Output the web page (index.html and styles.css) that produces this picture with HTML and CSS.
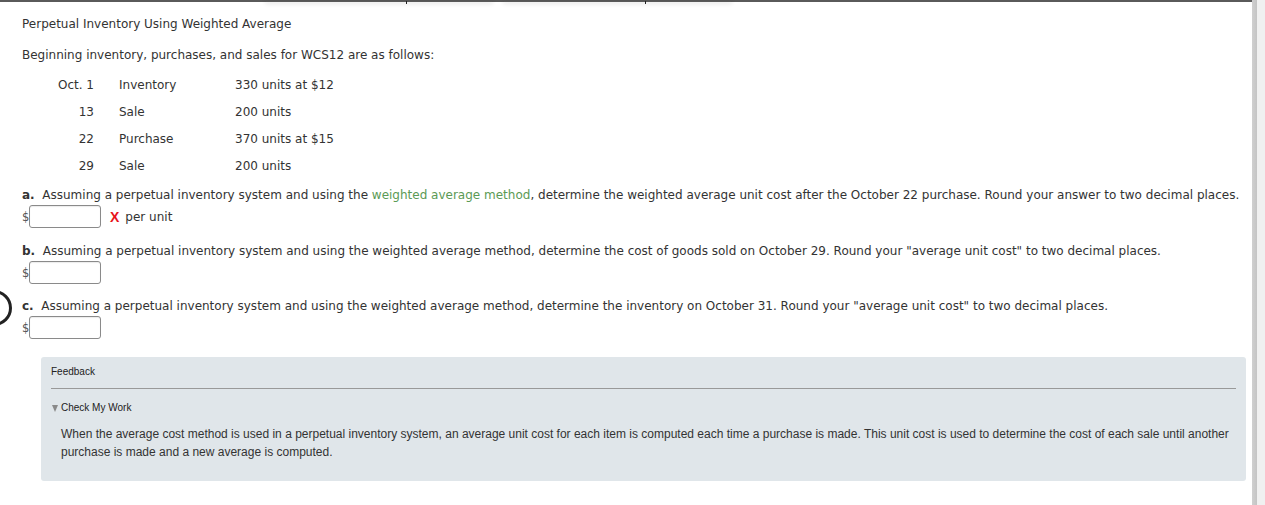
FILE: index.html
```html
<!DOCTYPE html>
<html>
<head>
<meta charset="utf-8">
<link rel="stylesheet" href="styles.css">
</head>
<body>
<div class="frame">
  <div class="topbar">
    <div class="tabshadow s1"><span class="tick"></span></div>
    <div class="tabshadow s2"><span class="tick"></span></div>
  </div>
  <div class="circle"></div>
  <div class="content">
    <p class="title">Perpetual Inventory Using Weighted Average</p>
    <p class="intro">Beginning inventory, purchases, and sales for WCS12 are as follows:</p>
    <div class="table">
      <span class="date">Oct. 1</span><span>Inventory</span><span>330 units at $12</span>
      <span class="date">13</span><span>Sale</span><span>200 units</span>
      <span class="date">22</span><span>Purchase</span><span>370 units at $15</span>
      <span class="date">29</span><span>Sale</span><span>200 units</span>
    </div>
    <p class="q qa"><b>a.</b>&nbsp; Assuming a perpetual inventory system and using the <span class="link">weighted average method</span>, determine the weighted average unit cost after the October 22 purchase. Round your answer to two decimal places.</p>
    <div class="answer"><span class="dollar">$</span><span class="input"></span><span class="x">X</span><span class="unit">per unit</span></div>
    <p class="q qb"><b>b.</b>&nbsp; Assuming a perpetual inventory system and using the weighted average method, determine the cost of goods sold on October 29. Round your "average unit cost" to two decimal places.</p>
    <div class="answer"><span class="dollar">$</span><span class="input"></span></div>
    <p class="q qc"><b>c.</b>&nbsp; Assuming a perpetual inventory system and using the weighted average method, determine the inventory on October 31. Round your "average unit cost" to two decimal places.</p>
    <div class="answer"><span class="dollar">$</span><span class="input"></span></div>
  </div>
  <div class="feedback">
    <div class="fb-title">Feedback</div>
    <div class="fb-rule"></div>
    <div class="fb-check"><span class="tri"></span>Check My Work</div>
    <p class="fb-text">When the average cost method is used in a perpetual inventory system, an average unit cost for each item is computed each time a purchase is made. This unit cost is used to determine the cost of each sale until another purchase is made and a new average is computed.</p>
  </div>
</div>
<div class="scrollbar"><div class="track"></div></div>
</body>
</html>
```
FILE: styles.css
```css
html, body {
  margin: 0;
  padding: 0;
  background: #fff;
  height: 505px;
  overflow: hidden;
}
body {
  display: flex;
  font-family: "DejaVu Sans", Verdana, sans-serif;
  color: #333;
}
.frame {
  position: relative;
  width: 1252px;
  flex: none;
}
.topbar {
  height: 2px;
  background: #5a5a5a;
  position: relative;
}
.tabshadow {
  position: absolute;
  top: 1px;
  height: 1px;
  box-shadow: 0 1px 4px 1px rgba(0,0,0,0.10);
}
.tabshadow.s1 { left: 266px; width: 226px; }
.tabshadow.s2 { left: 504px; width: 227px; }
.tick {
  position: absolute;
  top: 0;
  width: 1px;
  height: 3px;
  background: #222;
}
.s1 .tick { left: 140px; }
.s2 .tick { left: 141px; }
.circle {
  position: absolute;
  left: -24px;
  top: 290px;
  width: 30px;
  height: 30px;
  border: 3px solid #222;
  border-radius: 50%;
}
.content {
  padding: 14px 0 0 22px;
  font-size: 12px;
  line-height: 16px;
}
p { margin: 0; }
.intro { margin-top: 15px; }
.table {
  margin-top: 8px;
  display: grid;
  grid-template-columns: 72px 116px auto;
  grid-auto-rows: 27px;
  align-items: center;
  width: 420px;
}
.table span:nth-child(3n+2),
.table span:nth-child(3n) { padding-left: 25px; }
.date { text-align: right; }
.q { margin-top: 8px; }
.qb { margin-top: 15px; }
.qc { margin-top: 14px; }
.q b { font-weight: bold; }
.link { color: #5b9a55; }
.answer {
  display: flex;
  align-items: center;
  margin-top: 2px;
  height: 23px;
}
.dollar {
  color: #555;
  width: 7px;
  font-size: 11.5px;
}
.input {
  width: 70px;
  height: 21px;
  border: 1px solid #8a8a8a;
  border-radius: 3px;
  background: #fff;
  box-shadow: inset 0 1px 1px rgba(0,0,0,0.08);
}
.x {
  color: #e8141b;
  font-family: "Liberation Sans", Arial, sans-serif;
  font-weight: bold;
  font-size: 14px;
  margin-left: 9px;
  margin-right: 6px;
}
.feedback {
  margin: 18px 6px 0 41px;
  background: #e0e6ea;
  border-radius: 3px;
  padding: 9px 10px 20px 10px;
  font-family: "Liberation Sans", Arial, sans-serif;
  color: #222;
}
.fb-title { font-size: 10px; line-height: 12px; }
.fb-rule {
  height: 1px;
  background: #999;
  margin-top: 10px;
}
.fb-check {
  margin-top: 13px;
  font-size: 10px;
  line-height: 12px;
  display: flex;
  align-items: center;
}
.tri {
  width: 0;
  height: 0;
  border-left: 3px solid transparent;
  border-right: 3px solid transparent;
  border-top: 7px solid #8a8a8a;
  margin: 0 3px 0 1px;
}
.fb-text {
  margin: 11px 0 0 10px;
  font-size: 12px;
  line-height: 18px;
  color: #333;
}
.scrollbar {
  width: 13px;
  flex: none;
  background: #f0f0f0;
  height: 505px;
}
.track {
  width: 5px;
  height: 505px;
  background: linear-gradient(to right, #d0d0d0, #c4c4c4);
}
```
